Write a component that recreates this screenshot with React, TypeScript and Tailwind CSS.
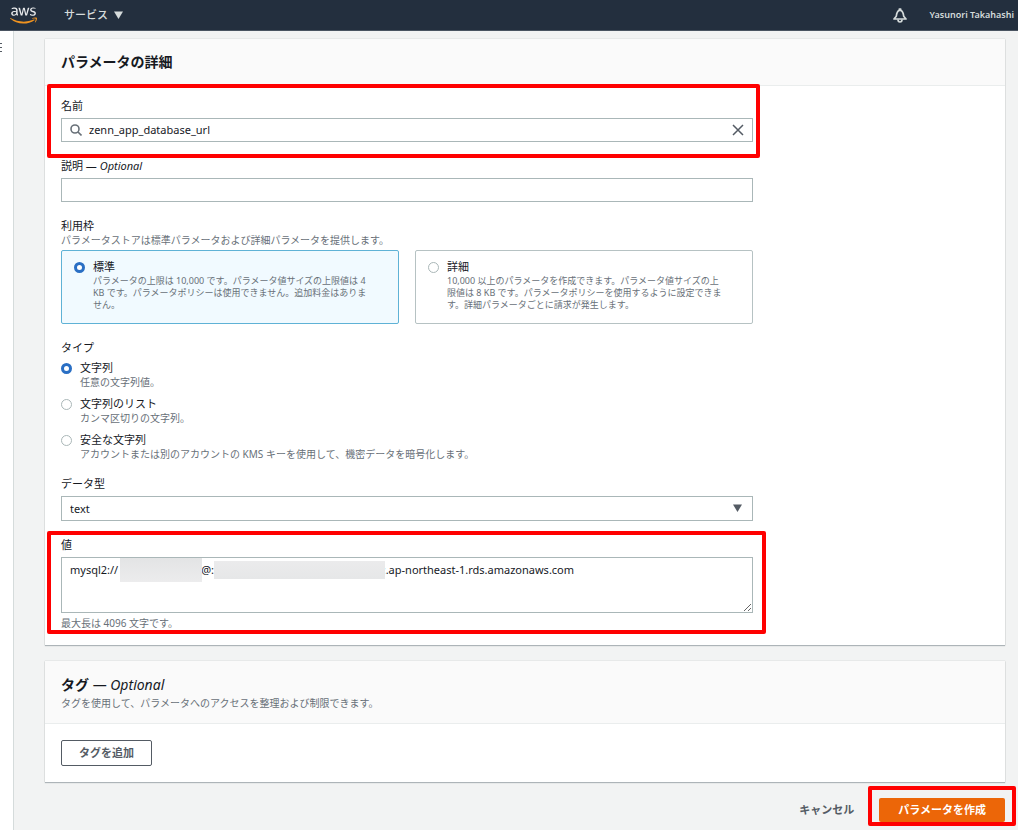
import { useState, type ReactNode } from "react";
import { FaAws } from "react-icons/fa";

const VALUE = "mysql2://" + "\u00a0".repeat(29) + "@:" + "\u00a0".repeat(59) + ":.ap-northeast-1.rds.amazonaws.com";

function Highlight({ className }: { className: string }) {
  return <div aria-hidden="true" className={"pointer-events-none absolute rounded-xs border-4 border-[#ff0000] " + className} />;
}

function Panel({ header, children }: { header: ReactNode; children: ReactNode }) {
  return (
    <section className="bg-white shadow-[0_1px_1px_0_#00162940,0_0_1px_0_#00162940]">
      <header className="border-b border-[#eaeded] bg-[#fafafa] px-4">{header}</header>
      {children}
    </section>
  );
}

function Radio({ name, checked, onChange }: { name: string; checked: boolean; onChange: () => void }) {
  return (
    <input
      type="radio"
      name={name}
      checked={checked}
      onChange={onChange}
      className="mt-[3px] size-[11px] shrink-0 appearance-none rounded-full border border-[#aab7b8] bg-white checked:border-[3px] checked:border-[#2a6fc4]"
    />
  );
}

function Tile({ title, text, checked, onChange }: { title: string; text: string; checked: boolean; onChange: () => void }) {
  return (
    <label
      className={
        "flex min-h-[74px] gap-2 rounded-xs border px-3 pt-2 " +
        (checked ? "border-[#5fb2d6] bg-[#f1faff]" : "border-[#b6c2c3] bg-white")
      }
    >
      <Radio name="tier" checked={checked} onChange={onChange} />
      <span className="block pr-1">
        <span className="block leading-4">{title}</span>
        <span className="block max-w-[280px] text-[9px] leading-3 text-[#687078]">{text}</span>
      </span>
    </label>
  );
}

const TYPES = [
  ["文字列", "任意の文字列値。"],
  ["文字列のリスト", "カンマ区切りの文字列。"],
  ["安全な文字列", "アカウントまたは別のアカウントの KMS キーを使用して、機密データを暗号化します。"],
];

const TIERS = [
  ["標準", "パラメータの上限は 10,000 です。パラメータ値サイズの上限値は 4 KB です。パラメータポリシーは使用できません。追加料金はありません。"],
  ["詳細", "10,000 以上のパラメータを作成できます。パラメータ値サイズの上限値は 8 KB です。パラメータポリシーを使用するように設定できます。詳細パラメータごとに請求が発生します。"],
];

export default function App() {
  const [name, setName] = useState("zenn_app_database_url");
  const [tier, setTier] = useState(0);
  const [type, setType] = useState(0);

  return (
    <div
      lang="ja"
      className="flex min-h-screen flex-col bg-[#f2f3f3] font-['Noto_Sans','Noto_Sans_CJK_JP',sans-serif] text-[11px] leading-4 text-[#16191f]"
    >
      <nav className="flex h-[31px] items-center border-b border-[#4a5461] bg-[#232f3e] pr-1 pl-2.5 text-[#d5dbdb]">
        <svg width="0" height="0" className="absolute" aria-hidden="true">
          <linearGradient id="aws-fill" x1="0" y1="0" x2="0" y2="1">
            <stop offset="0.62" stopColor="#e8eaec" />
            <stop offset="0.62" stopColor="#f0931f" />
          </linearGradient>
        </svg>
        <a href="#home" aria-label="AWS" className="flex">
          <FaAws className="size-[27px] fill-[url(#aws-fill)]" />
        </a>
        <button type="button" className="ml-[27px] flex items-center gap-1.5 font-medium">
          サービス
          <svg viewBox="0 0 9 8" className="h-2 w-[9px] fill-current" aria-hidden="true">
            <path d="M0 .5h9L4.500 8z" />
          </svg>
        </button>
        <button type="button" aria-label="通知" className="ml-auto">
          <svg viewBox="0 0 14 15" className="h-[15px] w-[14px] fill-none stroke-current" strokeWidth="1.700" strokeLinejoin="round" aria-hidden="true">
            <path d="M1 11L3.300 8.200C3.700 4.800 4.600 3 6.300 2.400V1h1.400v1.400C9.400 3 10.300 4.800 10.700 8.200L13 11z" />
            <path d="M5 11.500c0 3.300 4 3.300 4 0" />
          </svg>
        </button>
        <a href="#account" className="ml-[23px] text-[9px] font-semibold">
          Yasunori Takahashi
        </a>
      </nav>

      <div className="flex flex-1">
        <aside className="w-[14px] shrink-0 overflow-hidden border-r border-[#d5dbdb] bg-white pt-3">
          <button type="button" aria-label="メニューを開く" className="block">
            <svg viewBox="0 0 2 9" className="h-[9px] w-[2px] fill-[#545b64]" aria-hidden="true">
              <path d="M0 0h2v1H0zM0 4h2v1H0zM0 8h2v1H0z" />
            </svg>
          </button>
        </aside>

        <main className="flex min-w-0 flex-1 flex-col pt-2 pr-[13px] pb-1 pl-[31px]">
          <form onSubmit={(e) => e.preventDefault()} className="flex flex-col gap-4">
            <Panel header={<h2 className="py-[13px] text-[14px] leading-5 font-bold">パラメータの詳細</h2>}>
              <div className="px-4 pt-3 pb-4">
                <div className="flex max-w-[692px] flex-col gap-4">
                  <div className="relative flex flex-col gap-1">
                    <label htmlFor="name">名前</label>
                    <div className="flex h-6 items-center border border-[#aab7b8] bg-white px-2">
                      <svg viewBox="0 0 12 12" className="size-3 shrink-0 fill-none stroke-[#687078]" strokeWidth="1.600" aria-hidden="true">
                        <circle cx="5" cy="5" r="4" />
                        <path d="M8 8l3.500 3.500" />
                      </svg>
                      <input
                        id="name"
                        value={name}
                        onChange={(e) => setName(e.target.value)}
                        className="ml-[7px] min-w-0 flex-1 outline-none"
                      />
                      <button type="button" aria-label="クリア" onClick={() => setName("")}>
                        <svg viewBox="0 0 12 12" className="size-3 stroke-[#545b64]" strokeWidth="1.500" aria-hidden="true">
                          <path d="M1 1l10 10M11 1L1 11" />
                        </svg>
                      </button>
                    </div>
                    <Highlight className="-top-3.5 -right-[7px] -bottom-4 -left-3.5" />
                  </div>

                  <div className="flex flex-col gap-1">
                    <label htmlFor="description">
                      説明 — <i>Optional</i>
                    </label>
                    <input id="description" className="h-6 border border-[#aab7b8] bg-white px-2 outline-none" />
                  </div>

                  <fieldset>
                    <legend>利用枠</legend>
                    <p className="text-[10px] leading-3 text-[#687078]">
                      パラメータストアは標準パラメータおよび詳細パラメータを提供します。
                    </p>
                    <div className="mt-1 grid grid-cols-2 gap-4">
                      {TIERS.map(([title, text], i) => (
                        <Tile key={title} title={title} text={text} checked={tier === i} onChange={() => setTier(i)} />
                      ))}
                    </div>
                  </fieldset>

                  <fieldset>
                    <legend>タイプ</legend>
                    <div className="mt-1 flex flex-col gap-2">
                      {TYPES.map(([title, text], i) => (
                        <label key={title} className="flex gap-2">
                          <Radio name="type" checked={type === i} onChange={() => setType(i)} />
                          <span>
                            <span className="block">{title}</span>
                            <span className="block text-[10px] leading-3 text-[#687078]">{text}</span>
                          </span>
                        </label>
                      ))}
                    </div>
                  </fieldset>

                  <div className="flex flex-col gap-1">
                    <label htmlFor="data-type">データ型</label>
                    <div className="relative">
                      <select id="data-type" className="block h-[25px] w-full appearance-none border border-[#aab7b8] bg-white px-2 outline-none">
                        <option>text</option>
                      </select>
                      <svg viewBox="0 0 9 8" className="pointer-events-none absolute top-2 right-[11px] h-2 w-[9px] fill-[#545b64]" aria-hidden="true">
                        <path d="M0 .5h9L4.500 8z" />
                      </svg>
                    </div>
                  </div>

                  <div className="relative flex flex-col gap-1">
                    <label htmlFor="value">値</label>
                    <div className="relative">
                      <textarea
                        id="value"
                        defaultValue={VALUE}
                        className="block h-14 w-full resize-y border border-[#aab7b8] bg-white px-2 py-1 outline-none"
                      />
                      <div aria-hidden="true" className="absolute top-px left-[59px] h-6 w-[82px] bg-linear-to-b from-[#e3e4e5] to-[#ececed]" />
                      <div aria-hidden="true" className="absolute top-1 left-[153px] h-[18px] w-[171px] bg-linear-to-b from-[#ebebec] to-[#e6e7e8]" />
                    </div>
                    <p className="text-[10px] leading-3 text-[#687078]">最大長は 4096 文字です。</p>
                    <Highlight className="-top-1.5 -right-[13px] -bottom-[5px] -left-3.5" />
                  </div>
                </div>
              </div>
            </Panel>

            <Panel
              header={
                <div className="py-[14px]">
                  <h2 className="text-[14px] leading-5 font-bold">
                    タグ <i className="font-normal"><span className="not-italic">—</span> Optional</i>
                  </h2>
                  <p className="mt-0.5 text-[10px] leading-3 text-[#687078]">
                    タグを使用して、パラメータへのアクセスを整理および制限できます。
                  </p>
                </div>
              }
            >
              <div className="p-4">
                <button type="button" className="block h-[26px] rounded-xs border border-[#545b64] bg-white px-[17px] font-bold text-[#545b64]">
                  タグを追加
                </button>
              </div>
            </Panel>

            <div className="flex items-center justify-end gap-[25px] font-bold">
              <a href="#cancel" className="text-[#545b64]">
                キャンセル
              </a>
              <div className="relative">
                <button type="submit" className="block h-6 rounded-xs bg-[#ec6608] px-[19px] text-white">
                  パラメータを作成
                </button>
                <Highlight className="-top-3 -right-[11px] -bottom-1 -left-[11px]" />
              </div>
            </div>
          </form>
        </main>
      </div>
    </div>
  );
}
